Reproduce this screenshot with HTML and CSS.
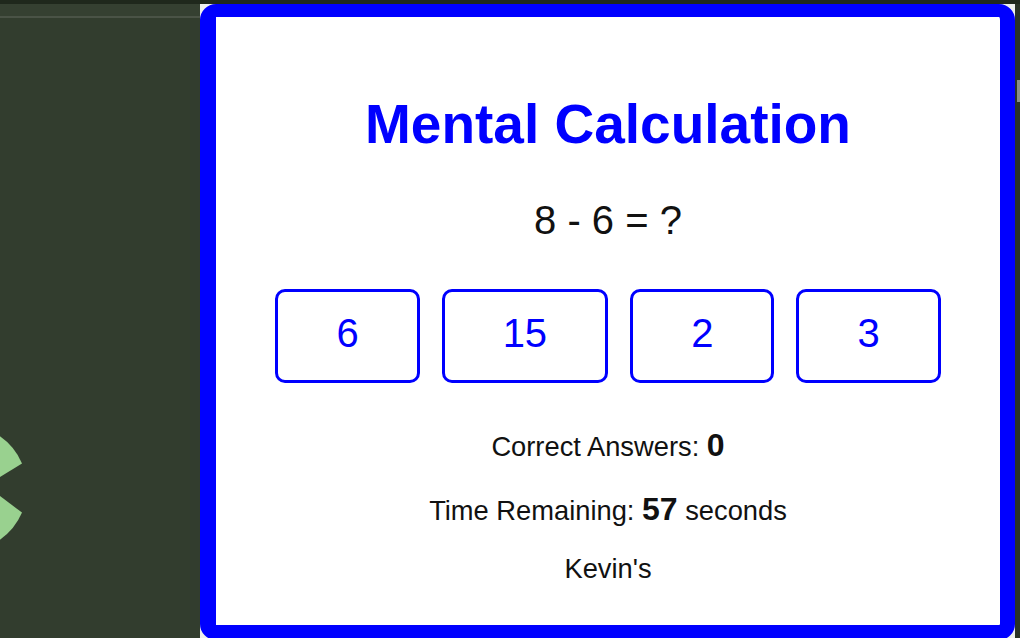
FILE: index.html
```html
<!DOCTYPE html>
<html>
<head>
<meta charset="utf-8">
<title>Mental Calculation</title>
<link rel="stylesheet" href="styles.css">
</head>
<body>
<div class="topband"></div>
<div class="main">
  <aside class="side">
    <div class="tabstrip"></div>
    <svg class="logo" width="30" height="110" viewBox="0 428 30 110" aria-hidden="true">
      <path d="M0,434.3 A63,63 0 0 1 22,461.4 L0,475 Z" fill="#99d18f"/>
      <path d="M0,494 L22,510.6 A63,63 0 0 1 0,537.7 Z" fill="#99d18f"/>
    </svg>
  </aside>
  <div class="popup">
    <section class="card">
      <h1 class="title">Mental Calculation</h1>
      <div class="question">8 - 6 = ?</div>
      <div class="answers">
        <button class="answer">6</button>
        <button class="answer">15</button>
        <button class="answer">2</button>
        <button class="answer">3</button>
      </div>
      <p class="stat stat-correct">Correct Answers: <strong>0</strong></p>
      <p class="stat stat-time">Time Remaining: <strong>57</strong> seconds</p>
      <p class="stat stat-name">Kevin's</p>
    </section>
  </div>
  <div class="edge">
    <div class="edge-thumb"></div>
  </div>
</div>
</body>
</html>
```
FILE: styles.css
```css
* { box-sizing: border-box; }
html, body {
  margin: 0;
  padding: 0;
  width: 1020px;
  height: 638px;
  overflow: hidden;
  background: #323d2e;
  font-family: "Liberation Sans", Arial, sans-serif;
}
.topband {
  height: 4px;
  background: #1f281c;
}
.main {
  display: flex;
  height: 634px;
}
.side {
  width: 200px;
  flex: none;
  display: flex;
  flex-direction: column;
}
.tabstrip {
  height: 14px;
  background: #354031;
  border-bottom: 2px solid #4a5346;
}
.logo {
  display: block;
  margin-top: 412px;
}
.popup {
  width: 815px;
  flex: none;
  background: #eef0ee;
  height: 640px;
}
.card {
  height: 636px;
  background: #ffffff;
  border-style: solid;
  border-color: #0000ff;
  border-width: 13px 15px 15px 16px;
  border-radius: 16px;
  display: flex;
  flex-direction: column;
  align-items: center;
  padding-top: 77px;
  color: #111111;
}
.title {
  margin: 0;
  font-size: 55px;
  line-height: 60px;
  font-weight: bold;
  color: #0000ff;
}
.question {
  margin-top: 43px;
  font-size: 40px;
  line-height: 46px;
}
.answers {
  margin-top: 46px;
  display: flex;
  gap: 22px;
}
.answer {
  font-family: "Liberation Sans", Arial, sans-serif;
  font-size: 40px;
  line-height: 46px;
  height: 94px;
  padding: 18px 58px 24px;
  background: #ffffff;
  color: #0000ff;
  border: 3px solid #0000ff;
  border-radius: 10px;
}
.stat {
  margin: 0;
  font-size: 27.3px;
  line-height: 36px;
}
.stat strong {
  font-size: 32px;
  line-height: 1;
}
.stat-correct { margin-top: 46px; }
.stat-time { margin-top: 28px; }
.stat-name { margin-top: 22px; }
.edge {
  flex: 1;
  background: #2a3326;
  padding-top: 76px;
}
.edge-thumb {
  margin-left: 2px;
  width: 3px;
  height: 22px;
  background: #8a8f88;
}
```
